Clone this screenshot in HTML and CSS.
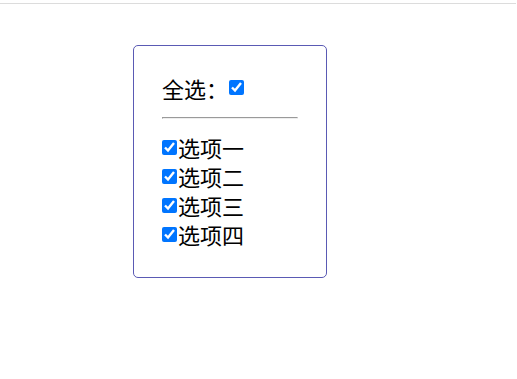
FILE: index.html
```html
<!DOCTYPE html>
<html lang="zh">
<head>
    <meta charset="UTF-8">
    <meta name="viewport" content="width=device-width, initial-scale=1.0">
    <title>全选</title>
    <link rel="stylesheet" href="styles.css">
</head>
<body>
    <div class="top-line"></div>
    <div class="select-box">
        <div class="select-all">全选：<input type="checkbox" id="all" checked></div>
        <hr>
        <div class="options">
            <label><input type="checkbox" class="item" checked>选项一</label>
            <label><input type="checkbox" class="item" checked>选项二</label>
            <label><input type="checkbox" class="item" checked>选项三</label>
            <label><input type="checkbox" class="item" checked>选项四</label>
        </div>
    </div>

    <script>
        const all = document.getElementById("all");
        const items = document.querySelectorAll(".item");
        all.addEventListener("change", function () {
            items.forEach(function (box) { box.checked = all.checked; });
        });
        items.forEach(function (box) {
            box.addEventListener("change", function () {
                all.checked = Array.from(items).every(function (b) { return b.checked; });
            });
        });
    </script>
</body>
</html>
```

FILE: styles.css
```css
body {
    margin: 0;
    font-family: "Noto Sans CJK SC", "Noto Sans", sans-serif;
    font-size: 22px;
    line-height: 29px;
    color: #000;
    background: #fff;
}
.top-line {
    height: 3px;
    width: 516px;
    border-bottom: 1px solid #dcdcdc;
}
.select-box {
    width: 136px;
    margin: 41px 0 0 133px;
    padding: 28px;
    border: 1px solid #5a5ab4;
    border-radius: 5px;
}
.select-all {
    display: flex;
    align-items: center;
}
.select-all input {
    width: 15px;
    height: 15px;
    margin: 0 0 2px 1px;
}
hr {
    margin: 14px 0 14px;
}
.options label {
    display: flex;
    align-items: center;
}
.options input {
    width: 15px;
    height: 15px;
    margin: 0 1px 0 0;
}
```
